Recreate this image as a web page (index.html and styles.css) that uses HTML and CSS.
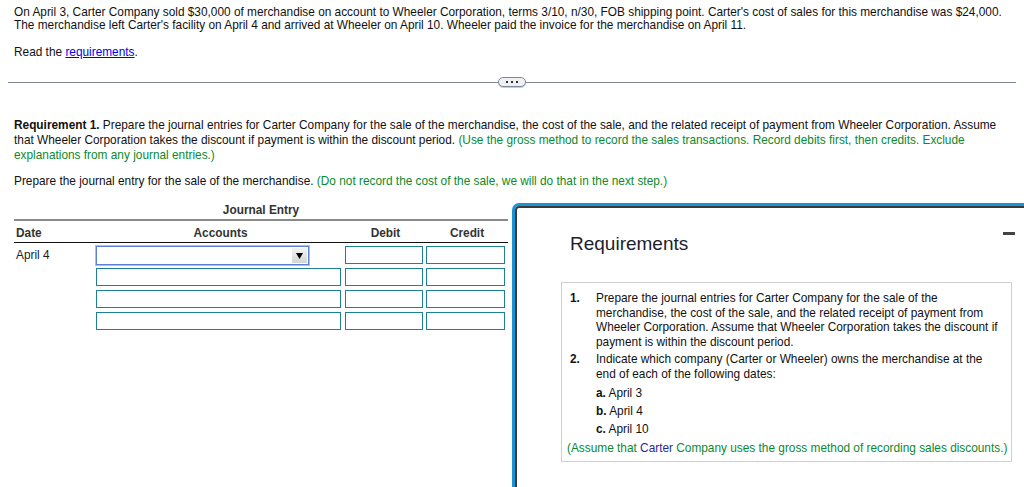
FILE: index.html
```html
<!DOCTYPE html>
<html>
<head>
<meta charset="utf-8">
<link rel="stylesheet" href="styles.css">
</head>
<body>
<div class="page">
  <div class="intro">
    <p class="lead">On April 3, Carter Company sold $30,000 of merchandise on account to Wheeler Corporation, terms 3/10, n/30, FOB shipping point. Carter's cost of sales for this merchandise was $24,000. The merchandise left Carter's facility on April 4 and arrived at Wheeler on April 10. Wheeler paid the invoice for the merchandise on April 11.</p>
    <p class="read">Read the <a href="#" class="link">requirements</a>.</p>
  </div>
  <div class="divider">
    <span class="rule"></span>
    <span class="pill"><i></i><i></i><i></i></span>
    <span class="rule"></span>
  </div>
  <div class="question">
    <p class="req"><b>Requirement 1.</b> Prepare the journal entries for Carter Company for the sale of the merchandise, the cost of the sale, and the related receipt of payment from Wheeler Corporation. Assume that Wheeler Corporation takes the discount if payment is within the discount period. <span class="green">(Use the gross method to record the sales transactions. Record debits first, then credits. Exclude explanations from any journal entries.)</span></p>
    <p class="step">Prepare the journal entry for the sale of the merchandise. <span class="green">(Do not record the cost of the sale, we will do that in the next step.)</span></p>
  </div>
  <div class="journal">
    <div class="jtitle">Journal Entry</div>
    <div class="jgrid">
      <div class="jh jh-date">Date</div>
      <div class="jh">Accounts</div>
      <div class="jh">Debit</div>
      <div class="jh">Credit</div>

      <div class="jdate">April 4</div>
      <div class="jcell"><div class="select"><span class="arrow"><svg width="7" height="6" viewBox="0 0 7 6"><path d="M0 0H7L3.5 6Z" fill="#000"/></svg></span></div></div>
      <div class="jcell"><div class="box box-d"></div></div>
      <div class="jcell"><div class="box box-c"></div></div>

      <div class="jdate"></div>
      <div class="jcell"><div class="box box-a"></div></div>
      <div class="jcell"><div class="box box-d"></div></div>
      <div class="jcell"><div class="box box-c"></div></div>

      <div class="jdate"></div>
      <div class="jcell"><div class="box box-a"></div></div>
      <div class="jcell"><div class="box box-d"></div></div>
      <div class="jcell"><div class="box box-c"></div></div>

      <div class="jdate"></div>
      <div class="jcell"><div class="box box-a"></div></div>
      <div class="jcell"><div class="box box-d"></div></div>
      <div class="jcell"><div class="box box-c"></div></div>
    </div>
  </div>
</div>

<div class="modal">
  <div class="mhead">
    <h2 class="mtitle">Requirements</h2>
    <span class="minimize"></span>
  </div>
  <div class="mbox">
    <ol class="rlist">
      <li><span class="num">1.</span><span class="rtext">Prepare the journal entries for Carter Company for the sale of the merchandise, the cost of the sale, and the related receipt of payment from Wheeler Corporation. Assume that Wheeler Corporation takes the discount if payment is within the discount period.</span></li>
      <li><span class="num">2.</span><span class="rtext">Indicate which company (Carter or Wheeler) owns the merchandise at the end of each of the following dates:
        <span class="sub sub-first"><b>a.</b> April 3</span>
        <span class="sub"><b>b.</b> April 4</span>
        <span class="sub"><b>c.</b> April 10</span></span></li>
    </ol>
    <p class="note">(Assume that <span class="blue">Carter</span> Company uses the gross method of recording sales discounts.)</p>
  </div>
</div>
</body>
</html>
```

FILE: styles.css
```css
html, body {
  margin: 0;
  padding: 0;
  background: #fff;
}
body {
  font-family: "Liberation Sans", Arial, sans-serif;
  font-size: 11.85px;
  color: #111;
  width: 1024px;
  height: 487px;
  overflow: hidden;
  position: relative;
}
p { margin: 0; }

.intro {
  padding: 6px 14px 0 14px;
}
.lead {
  line-height: 13px;
  width: 995px;
}
.read {
  margin-top: 14px;
  line-height: 13px;
}
.link {
  color: #0000ee;
  text-decoration: underline;
}

.divider {
  display: flex;
  align-items: center;
  margin: 16px 8px 0 8px;
  height: 14px;
}
.rule {
  flex: 1;
  height: 1px;
  background: #7d8797;
}
.pill {
  width: 26px;
  height: 8px;
  border: 1px solid #7d8797;
  border-radius: 5px;
  background: #eef0f3;
  display: flex;
  align-items: center;
  justify-content: center;
  gap: 3px;
  box-shadow: 0 1px 0 #c7ccd3;
}
.pill i {
  width: 2px;
  height: 2px;
  background: #333;
  display: block;
}

.question {
  padding: 0 14px;
  margin-top: 29px;
}
.req {
  line-height: 15px;
  width: 990px;
}
.green { color: #0a8a2a; }
.step {
  margin-top: 11px;
  line-height: 15px;
}

.journal {
  margin: 14px 0 0 14px;
  width: 494px;
}
.jtitle {
  font-weight: bold;
  color: #333;
  text-align: center;
  line-height: 14px;
  padding-bottom: 2px;
  border-bottom: 2px solid #8a8a8a;
}
.jgrid {
  display: grid;
  grid-template-columns: 82px 249px 81px 82px;
  grid-auto-rows: 22px;
}
.jh {
  font-weight: bold;
  color: #333;
  text-align: center;
  line-height: 22px;
  height: 22px;
  border-bottom: 1px solid #111;
  padding-top: 1px;
  box-sizing: border-box;
}
.jh-date {
  text-align: left;
  padding-left: 2px;
}
.jdate {
  padding-left: 2px;
  line-height: 18px;
  padding-top: 3px;
  color: #222;
}
.jcell {
  padding-top: 3px;
}
.box {
  height: 18px;
  border: 1px solid #1d8096;
  background: #fff;
  box-sizing: border-box;
}
.box-a { width: 245px; }
.box-d { width: 78px; }
.box-c { width: 79px; }
.select {
  width: 213px;
  height: 19px;
  border: 1px solid #5a83d8;
  box-shadow: 0 0 0 1px #a9c0ee;
  box-sizing: border-box;
  background: #fff;
  display: flex;
  justify-content: flex-end;
  align-items: stretch;
  padding: 1px;
}
.arrow {
  width: 15px;
  background: linear-gradient(#f4f4f4, #d4d4d4);
  display: flex;
  align-items: center;
  justify-content: center;
}

.modal {
  position: absolute;
  left: 512px;
  top: 203px;
  width: 540px;
  height: 320px;
  border: 3px solid #1e93d3;
  border-radius: 7px 0 0 0;
  box-shadow: inset 0 0 0 2px #3a3a3a;
  background: #fff;
  box-sizing: border-box;
}
.mhead {
  display: flex;
  justify-content: space-between;
  padding: 27px 0 0 55px;
  width: 445px;
  height: 55px;
  box-sizing: content-box;
}
.mtitle {
  margin: 0;
  font-weight: normal;
  font-size: 19px;
  color: #1b1e2e;
  line-height: 22px;
}
.minimize {
  width: 12px;
  height: 3px;
  background: #444;
  margin-top: -1px;
}
.mbox {
  position: absolute;
  left: 46px;
  top: 76px;
  width: 451px;
  height: 180px;
  border: 1px solid #cfcfcf;
  box-sizing: border-box;
  padding: 8px 0 0 5px;
}
.rlist {
  list-style: none;
  margin: 0;
  padding: 0;
}
.rlist li {
  display: flex;
  line-height: 14.5px;
  margin-bottom: 3px;
}
.num {
  font-weight: bold;
  width: 29px;
  flex: none;
  padding-left: 3px;
  box-sizing: border-box;
}
.rtext {
  width: 405px;
}
.sub {
  display: block;
  line-height: 18px;
}
.sub-first { margin-top: 3px; }
.note {
  color: #0a8a2a;
  line-height: 14px;
  margin-top: 0;
  white-space: nowrap;
}
.blue { color: #1f2a9a; }
```
